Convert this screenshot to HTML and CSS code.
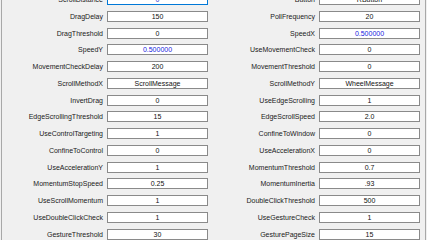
FILE: index.html
```html
<!DOCTYPE html>
<html>
<head>
<meta charset="utf-8">
<link rel="stylesheet" href="styles.css">
</head>
<body>
<div class="frame">
  <div class="grid">
    <div class="label">ScrollDistance</div><div class="box focused"><span class="sel">0</span></div>
    <div class="label">Button</div><div class="box">RButton</div>

    <div class="label">DragDelay</div><div class="box">150</div>
    <div class="label">PollFrequency</div><div class="box">20</div>

    <div class="label">DragThreshold</div><div class="box">0</div>
    <div class="label">SpeedX</div><div class="box blue">0.500000</div>

    <div class="label">SpeedY</div><div class="box blue">0.500000</div>
    <div class="label">UseMovementCheck</div><div class="box">0</div>

    <div class="label">MovementCheckDelay</div><div class="box">200</div>
    <div class="label">MovementThreshold</div><div class="box">0</div>

    <div class="label">ScrollMethodX</div><div class="box">ScrollMessage</div>
    <div class="label">ScrollMethodY</div><div class="box">WheelMessage</div>

    <div class="label">InvertDrag</div><div class="box">0</div>
    <div class="label">UseEdgeScrolling</div><div class="box">1</div>

    <div class="label">EdgeScrollingThreshold</div><div class="box">15</div>
    <div class="label">EdgeScrollSpeed</div><div class="box">2.0</div>

    <div class="label">UseControlTargeting</div><div class="box">1</div>
    <div class="label">ConfineToWindow</div><div class="box">0</div>

    <div class="label">ConfineToControl</div><div class="box">0</div>
    <div class="label">UseAccelerationX</div><div class="box">0</div>

    <div class="label">UseAccelerationY</div><div class="box">1</div>
    <div class="label">MomentumThreshold</div><div class="box">0.7</div>

    <div class="label">MomentumStopSpeed</div><div class="box">0.25</div>
    <div class="label">MomentumInertia</div><div class="box">.93</div>

    <div class="label">UseScrollMomentum</div><div class="box">1</div>
    <div class="label">DoubleClickThreshold</div><div class="box">500</div>

    <div class="label">UseDoubleClickCheck</div><div class="box">1</div>
    <div class="label">UseGestureCheck</div><div class="box">1</div>

    <div class="label">GestureThreshold</div><div class="box">30</div>
    <div class="label">GesturePageSize</div><div class="box">15</div>
  </div>
</div>
</body>
</html>
```

FILE: styles.css
```css
html, body {
  margin: 0;
  padding: 0;
  background: #f0f0f0;
  overflow: hidden;
}
body {
  width: 427px;
  height: 240px;
  font-family: "Liberation Sans", Arial, sans-serif;
  font-size: 7px;
  color: #1a1a1a;
}
.frame {
  margin: 0 1px;
  height: 240px;
  border-left: 1px solid #a8a8a8;
  border-right: 1px solid #a8a8a8;
  overflow: hidden;
}
.grid {
  display: grid;
  grid-template-columns: 105px 101px 111px 101px;
  grid-auto-rows: 16.75px;
  margin-top: -6px;
}
.label {
  height: 11px;
  line-height: 11px;
  text-align: right;
  padding-right: 4px;
  white-space: nowrap;
}
.box {
  box-sizing: border-box;
  height: 11px;
  line-height: 9px;
  background: #fff;
  border: 1px solid #8a8a8a;
  text-align: center;
  color: #111;
  white-space: nowrap;
}
.box.focused {
  border-color: #0078d7;
}
.sel {
  color: #3030d0;
}
.blue {
  color: #2020e0;
}
```
